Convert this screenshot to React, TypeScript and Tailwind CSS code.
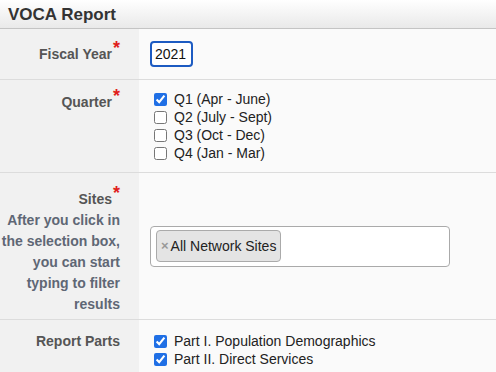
import React from 'react';

const labelCls = "w-[139px] shrink-0 bg-[#f1f1f1] pr-[19px] text-right text-[14px] font-bold text-[#555] leading-[21px]";

function Req() {
  return <span className="inline-block text-[#e0201b] text-[18px] leading-none ml-[1px] relative top-[-5px]">*</span>;
}

function Check({ label, checked }: { label: string; checked?: boolean }) {
  return (
    <label className="flex items-center h-[18px] text-[14px] text-[#222]">
      <input type="checkbox" defaultChecked={checked} className="w-[13px] h-[13px] m-0 ml-[4px] mr-[7px] accent-[#1f6fe5]" />
      {label}
    </label>
  );
}

export default function App() {
  return (
    <div className="w-[496px] h-[372px] overflow-hidden bg-white" style={{ fontFamily: '"Liberation Sans", Arial, sans-serif' }}>
      {/* header */}
      <div className="h-[29px] bg-gradient-to-b from-white to-[#e9e9e9] border-b border-[#c4c4c4] px-[8px] flex items-center">
        <h2 className="text-[17px] font-bold text-[#333] mt-[1px]">VOCA Report</h2>
      </div>

      {/* Fiscal Year */}
      <div className="flex h-[51px] border-b border-[#dcdcdc]">
        <div className={labelCls + " pt-[15px]"}>Fiscal Year<Req /></div>
        <div className="flex-1 bg-[#fafafa] pl-[11px] flex items-center">
          <input
            defaultValue="2021"
            className="w-[43px] h-[26px] border-2 border-[#1d5bc2] rounded-[4px] bg-white px-[3px] text-[14px] text-[#111] outline-none"
          />
        </div>
      </div>

      {/* Quarter */}
      <div className="flex h-[93px] border-b border-[#dcdcdc]">
        <div className={labelCls + " pt-[12px]"}>Quarter<Req /></div>
        <div className="flex-1 bg-[#fafafa] pl-[11px] flex flex-col justify-center">
          <Check label="Q1 (Apr - June)" checked />
          <Check label="Q2 (July - Sept)" />
          <Check label="Q3 (Oct - Dec)" />
          <Check label="Q4 (Jan - Mar)" />
        </div>
      </div>

      {/* Sites */}
      <div className="flex h-[147px] border-b border-[#dcdcdc]">
        <div className={labelCls + " pt-[16px]"}>
          <div>Sites<Req /></div>
          <div className="text-[#5f6775]">After you click in the selection box, you can start typing to filter results</div>
        </div>
        <div className="flex-1 bg-[#fafafa] pl-[11px] flex items-center">
          <div className="w-[300px] h-[41px] border border-[#aaa] rounded-[4px] bg-white px-[5px] flex items-center">
            <span className="h-[32px] bg-[#e4e4e4] border border-[#aaa] rounded-[4px] pl-[4px] pr-[4px] flex items-center text-[14px] text-[#222]">
              <span className="text-[#999] font-bold text-[13px] mr-[2px]">×</span>
              All Network Sites
            </span>
          </div>
        </div>
      </div>

      {/* Report Parts */}
      <div className="flex h-[60px]">
        <div className={labelCls + " pt-[11px]"}>Report Parts</div>
        <div className="flex-1 bg-[#fafafa] pl-[11px] pt-[12px] flex flex-col">
          <Check label="Part I. Population Demographics" checked />
          <Check label="Part II. Direct Services" checked />
        </div>
      </div>
    </div>
  );
}
